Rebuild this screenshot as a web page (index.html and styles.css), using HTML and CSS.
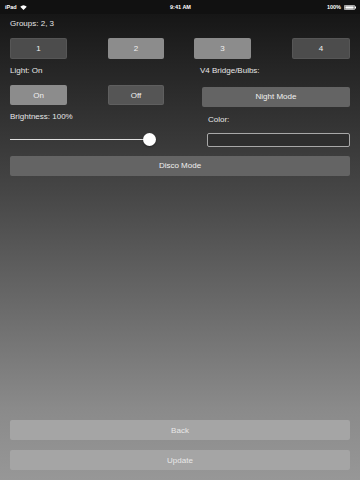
FILE: index.html
```html
<!DOCTYPE HTML>
<html>
<head>
<meta charset="UTF-8">
<title>Light Control</title>
<link rel="stylesheet" href="styles.css">
</head>
<body>
<div class="screen">
	<div class="status-bar">
		<span class="carrier">iPad
			<svg class="wifi" width="7" height="5" viewBox="0 0 14 10">
				<path d="M7 10 L0.5 3.5 A9.5 9.5 0 0 1 13.5 3.5 Z" fill="#fff"/>
			</svg>
		</span>
		<span class="clock">9:41 AM</span>
		<span class="battery">100%
			<svg width="12" height="5" viewBox="0 0 24 10">
				<rect x="0.75" y="0.75" width="20.5" height="8.5" rx="1.5" fill="none" stroke="#fff" stroke-width="1.5"/>
				<rect x="2.5" y="2.5" width="17" height="5" fill="#fff"/>
				<rect x="22" y="3" width="2" height="4" fill="#fff"/>
			</svg>
		</span>
	</div>

	<div class="content">
		<p class="label groups-label">Groups: 2, 3</p>
		<div class="two-col">
			<div class="pair">
				<button class="btn btn-dark btn-group">1</button>
				<button class="btn btn-light btn-group">2</button>
			</div>
			<div class="pair">
				<button class="btn btn-light btn-group">3</button>
				<button class="btn btn-dark btn-group btn-wide">4</button>
			</div>
		</div>

		<div class="two-col">
			<div class="col">
				<p class="label section-label">Light: On</p>
				<div class="pair">
					<button class="btn btn-light btn-small">On</button>
					<button class="btn btn-dark btn-small btn-off">Off</button>
				</div>
				<p class="label section-label">Brightness: 100%</p>
				<div class="slider">
					<div class="slider-track"></div>
					<div class="slider-thumb"></div>
				</div>
			</div>
			<div class="col">
				<p class="label section-label bridge-label">V4 Bridge/Bulbs:</p>
				<button class="btn btn-mid btn-night">Night Mode</button>
				<p class="label color-label">Color:</p>
				<div class="color-input"></div>
			</div>
		</div>

		<button class="btn btn-mid btn-full btn-disco">Disco Mode</button>

		<div class="footer">
			<button class="btn btn-pale btn-full">Back</button>
			<button class="btn btn-pale btn-full btn-update">Update</button>
		</div>
	</div>
</div>
</body>
</html>
```

FILE: styles.css
```css
/* *** Page *** */
body {
	margin: 0;
	font-family: "Liberation Sans", Arial, sans-serif;
	color: #e6e6e6;
}

.screen {
	width: 360px;
	height: 480px;
	display: flex;
	flex-direction: column;
	background: linear-gradient(to bottom, #121212 0%, #202020 10%, #464646 40%, #8a8a8a 85%, #979797 100%);
}

/* *** Status bar *** */
.status-bar {
	height: 14px;
	display: flex;
	align-items: center;
	justify-content: space-between;
	padding: 0 4px 0 5px;
	font-size: 5.5px;
	font-weight: bold;
	color: #fff;
	background: #111;
}

.carrier, .battery {
	width: 60px;
	display: flex;
	align-items: center;
	gap: 3px;
}

.battery {
	justify-content: flex-end;
}

/* *** Content *** */
.content {
	flex: 1;
	display: flex;
	flex-direction: column;
	padding: 0 10px 10px 10px;
}

.label {
	margin: 0;
	font-size: 8px;
	line-height: 10px;
}

.groups-label {
	margin-top: 5px;
	margin-bottom: 9px;
}

.section-label {
	margin-top: 7px;
	margin-bottom: 9px;
}

.bridge-label {
	padding-left: 6px;
}

.color-label {
	margin-top: 8px;
	margin-bottom: 8px;
	padding-left: 14px;
}

.two-col {
	display: grid;
	grid-template-columns: 154px 156px;
	column-gap: 30px;
}

.pair {
	display: flex;
	justify-content: space-between;
}

/* *** Buttons *** */
.btn {
	border: none;
	border-radius: 2px;
	padding: 0;
	font-family: inherit;
	font-size: 8px;
	color: #f0f0f0;
	height: 20px;
}

.btn-dark {
	background: #4c4c4c;
	box-shadow: inset 0 0 0 1px rgba(255, 255, 255, 0.06);
}

.btn-light {
	background: #8c8c8c;
}

.btn-mid {
	background: #646464;
}

.btn-pale {
	background: #a5a5a5;
	color: #e8e8e8;
}

.btn-group {
	width: 56px;
	height: 21px;
}

.btn-group:first-child {
	width: 57px;
}

.btn-wide {
	width: 58px;
}

.btn-small {
	width: 57px;
}

.btn-off {
	width: 56px;
	background: #555;
}

.btn-night {
	margin-left: 8px;
	width: 148px;
}

.btn-full {
	width: 100%;
}

.btn-disco {
	margin-top: 9px;
}

/* *** Slider *** */
.slider {
	display: flex;
	align-items: center;
	height: 13px;
	margin-top: 11px;
}

.slider-track {
	width: 134px;
	height: 1px;
	background: #e0e0e0;
}

.slider-thumb {
	width: 13px;
	height: 13px;
	border-radius: 50%;
	background: #fff;
	margin-left: -1px;
	box-shadow: 0 1px 2px rgba(0, 0, 0, 0.4);
}

/* *** Color field *** */
.color-input {
	margin-left: 13px;
	height: 12px;
	border: 1px solid #a8a8a8;
	border-radius: 2px;
	background: #2e2e2e;
}

/* *** Footer *** */
.footer {
	margin-top: auto;
	display: flex;
	flex-direction: column;
	gap: 10px;
}
```
